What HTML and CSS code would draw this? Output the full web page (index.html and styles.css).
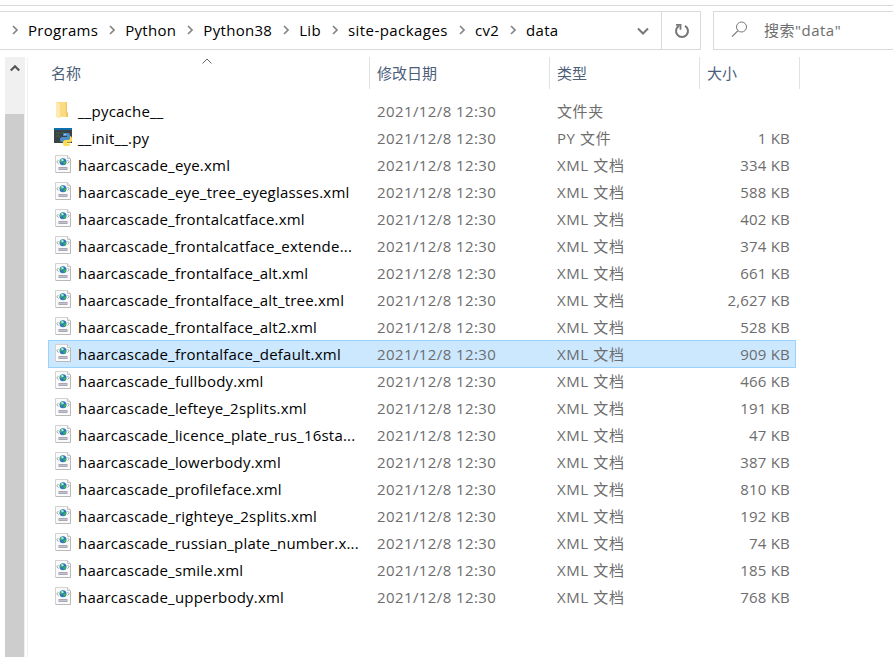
FILE: index.html
```
<!DOCTYPE html>
<html lang="zh">
<head>
  <meta charset="UTF-8">
  <title>data</title>
  <link rel="stylesheet" href="styles.css">
</head>
<body>
<svg class="symbols" width="0" height="0">
  <symbol id="arrow" viewBox="0 0 6 10">
    <path d="M1 1l4 4-4 4" fill="none" stroke="#858585" stroke-width="1.7"/>
  </symbol>
  <symbol id="folder" viewBox="0 0 18 20">
    <path d="M2 2h11v10l1 1v4H2z" fill="#fbdc84"/>
    <path d="M11.500 2.500h1.500v9.500l1 1v4h-2z" fill="#efc663"/>
    <path d="M2 2l4 2v14.800l-4-1.800z" fill="#ffebb0"/>
  </symbol>
  <symbol id="python" viewBox="0 0 18 20">
    <path d="M0 1h18v15H0z" fill="#3b4145"/>
    <path d="M0 1h18v2H0z" fill="#0f70b0"/>
    <path d="M2 6h4M7 6h3M2 9h4" stroke="#3f6a45"/>
    <path d="M10 6h4q2 0 2 2v3q0 2-2 2h-3q-2 0-2 2h-1q-2 0-2-2v-1q0-2 2-2h5V9H9V8q0-2 1-2z" fill="#4b8fca"/>
    <path d="M16 9q2 0 2 2.500v2q0 2-2 2h-3v1h3q0 2-1 2.500h-4q-2 0-2-2v-2q0-2 2-2h3q2 0 2-2z" fill="#ffdc55"/>
    <path d="M10.500 7h1v1h-1z" fill="#fff"/>
  </symbol>
  <symbol id="xml" viewBox="0 0 18 20">
    <path d="M1.500 1.500h12l3 3v14h-15z" fill="#fafafa" stroke="#d2d2d2"/>
    <path d="M16.500 5v13.500H2" fill="none" stroke="#b9b9b9"/>
    <path d="M13.500 1.500v3h3" fill="#eee" stroke="#c4c4c4"/>
    <path d="M4.500 6L2.800 7.800l1.700 1.800M13.500 6l1.700 1.800-1.700 1.800" fill="none" stroke="#a4a4ae"/>
    <circle cx="9" cy="7.800" r="3.500" fill="#2f74c0"/>
    <path d="M5.800 7.500q.7-3.200 4-3l-1 2.200-1.500 2zM9.200 7.500l3.200 0q-.2 2.600-2.700 3.600z" fill="#35b455"/>
    <path d="M7 5.500l2-.8.800 2-1.800.8z" fill="#a9e8f5"/>
    <path d="M4.500 14.500h9" stroke="#a8a7b5" stroke-width="3"/>
    <path d="M4.500 14.500h9" stroke="#c4c3cd"/>
  </symbol>
</svg>

<div class="toolbar">
  <div class="address">
    <ul class="path">
      <li><svg class="arrow"><use href="#arrow"/></svg><span>Programs</span></li>
      <li><svg class="arrow"><use href="#arrow"/></svg><span>Python</span></li>
      <li><svg class="arrow"><use href="#arrow"/></svg><span>Python38</span></li>
      <li><svg class="arrow"><use href="#arrow"/></svg><span>Lib</span></li>
      <li><svg class="arrow"><use href="#arrow"/></svg><span class="long">site-packages</span></li>
      <li><svg class="arrow"><use href="#arrow"/></svg><span>cv2</span></li>
      <li><svg class="arrow"><use href="#arrow"/></svg><span>data</span></li>
    </ul>
    <svg class="drop" width="12" height="8" viewBox="0 0 12 8"><path d="M1 1.500l5 5 5-5" fill="none" stroke="#777" stroke-width="2"/></svg>
    <div class="refresh">
      <svg width="16" height="16" viewBox="0 0 16 16"><path d="M11 2.800a6 6 0 1 1-6 0" fill="none" stroke="#777" stroke-width="2"/><path d="M2 1.800h4.500v5" fill="none" stroke="#777" stroke-width="1.800"/></svg>
    </div>
  </div>
  <div class="search">
    <svg width="17" height="17" viewBox="0 0 17 17"><circle cx="10.500" cy="6" r="5" fill="none" stroke="#777"/><path d="M7 9.600L1 15.600" stroke="#777" stroke-width="1.200"/></svg>
    <span>搜索"data"</span>
  </div>
</div>

<div class="main">
  <div class="scroll">
    <svg width="10" height="8" viewBox="0 0 10 8"><path d="M.8 6.500L5 2.200l4.200 4.300" fill="none" stroke="#555" stroke-width="2.200"/></svg>
    <div class="thumb"></div>
  </div>
  <div class="files">
    <div class="head">
      <div class="name">名称
        <svg class="sort" width="10" height="6" viewBox="0 0 10 6"><path d="M.5 5.500l4.500-4.500 4.500 4.500" fill="none" stroke="#666"/></svg>
      </div>
      <div class="date">修改日期</div>
      <div class="type">类型</div>
      <div class="size">大小</div>
    </div>
    <ul class="list">
      <li><svg class="icon"><use href="#folder"/></svg><span class="name">__pycache__</span><span class="date">2021/12/8 12:30</span><span class="type">文件夹</span><span class="size"></span></li>
      <li><svg class="icon"><use href="#python"/></svg><span class="name">__init__.py</span><span class="date">2021/12/8 12:30</span><span class="type">PY 文件</span><span class="size">1 KB</span></li>
      <li><svg class="icon"><use href="#xml"/></svg><span class="name">haarcascade_eye.xml</span><span class="date">2021/12/8 12:30</span><span class="type">XML 文档</span><span class="size">334 KB</span></li>
      <li><svg class="icon"><use href="#xml"/></svg><span class="name">haarcascade_eye_tree_eyeglasses.xml</span><span class="date">2021/12/8 12:30</span><span class="type">XML 文档</span><span class="size">588 KB</span></li>
      <li><svg class="icon"><use href="#xml"/></svg><span class="name">haarcascade_frontalcatface.xml</span><span class="date">2021/12/8 12:30</span><span class="type">XML 文档</span><span class="size">402 KB</span></li>
      <li><svg class="icon"><use href="#xml"/></svg><span class="name">haarcascade_frontalcatface_extende...</span><span class="date">2021/12/8 12:30</span><span class="type">XML 文档</span><span class="size">374 KB</span></li>
      <li><svg class="icon"><use href="#xml"/></svg><span class="name">haarcascade_frontalface_alt.xml</span><span class="date">2021/12/8 12:30</span><span class="type">XML 文档</span><span class="size">661 KB</span></li>
      <li><svg class="icon"><use href="#xml"/></svg><span class="name">haarcascade_frontalface_alt_tree.xml</span><span class="date">2021/12/8 12:30</span><span class="type">XML 文档</span><span class="size">2,627 KB</span></li>
      <li><svg class="icon"><use href="#xml"/></svg><span class="name">haarcascade_frontalface_alt2.xml</span><span class="date">2021/12/8 12:30</span><span class="type">XML 文档</span><span class="size">528 KB</span></li>
      <li class="current"><svg class="icon"><use href="#xml"/></svg><span class="name">haarcascade_frontalface_default.xml</span><span class="date">2021/12/8 12:30</span><span class="type">XML 文档</span><span class="size">909 KB</span></li>
      <li><svg class="icon"><use href="#xml"/></svg><span class="name">haarcascade_fullbody.xml</span><span class="date">2021/12/8 12:30</span><span class="type">XML 文档</span><span class="size">466 KB</span></li>
      <li><svg class="icon"><use href="#xml"/></svg><span class="name">haarcascade_lefteye_2splits.xml</span><span class="date">2021/12/8 12:30</span><span class="type">XML 文档</span><span class="size">191 KB</span></li>
      <li><svg class="icon"><use href="#xml"/></svg><span class="name">haarcascade_licence_plate_rus_16sta...</span><span class="date">2021/12/8 12:30</span><span class="type">XML 文档</span><span class="size">47 KB</span></li>
      <li><svg class="icon"><use href="#xml"/></svg><span class="name">haarcascade_lowerbody.xml</span><span class="date">2021/12/8 12:30</span><span class="type">XML 文档</span><span class="size">387 KB</span></li>
      <li><svg class="icon"><use href="#xml"/></svg><span class="name">haarcascade_profileface.xml</span><span class="date">2021/12/8 12:30</span><span class="type">XML 文档</span><span class="size">810 KB</span></li>
      <li><svg class="icon"><use href="#xml"/></svg><span class="name">haarcascade_righteye_2splits.xml</span><span class="date">2021/12/8 12:30</span><span class="type">XML 文档</span><span class="size">192 KB</span></li>
      <li><svg class="icon"><use href="#xml"/></svg><span class="name">haarcascade_russian_plate_number.x...</span><span class="date">2021/12/8 12:30</span><span class="type">XML 文档</span><span class="size">74 KB</span></li>
      <li><svg class="icon"><use href="#xml"/></svg><span class="name">haarcascade_smile.xml</span><span class="date">2021/12/8 12:30</span><span class="type">XML 文档</span><span class="size">185 KB</span></li>
      <li><svg class="icon"><use href="#xml"/></svg><span class="name">haarcascade_upperbody.xml</span><span class="date">2021/12/8 12:30</span><span class="type">XML 文档</span><span class="size">768 KB</span></li>
    </ul>
  </div>
</div>
</body>
</html>
```
FILE: styles.css
```
* {
  box-sizing: border-box;
}

body, div, ul, li {
  margin: 0;
  padding: 0;
}

ul {
  list-style-type: none;
}

body {
  height: 657px;
  padding-top: 5px;
  overflow: hidden;
  background: #fff;
  color: #000;
  font: 15px/20px "Open Sans", "Noto Sans CJK SC", sans-serif;
}

.symbols {
  position: absolute;
}

.toolbar {
  display: flex;
  height: 52px;
  padding-top: 5px;
  border-top: 1px solid #d9d9d9;
}

.address {
  display: flex;
  align-items: center;
  width: 701px;
  height: 39px;
  border: 1px solid #d9d9d9;
  border-left: 0;
}

.path {
  display: flex;
  flex: 1;
  gap: 11px;
  padding: 0 0 2px 12px;
  letter-spacing: 0.3px;
}

.path li {
  display: flex;
  align-items: center;
  gap: 10px;
}

.path .long {
  letter-spacing: 0.45px;
}

.arrow {
  width: 6px;
  height: 10px;
}

.drop {
  margin-right: 12px;
}

.refresh {
  display: flex;
  align-items: center;
  justify-content: center;
  width: 39px;
  height: 37px;
  padding-left: 2px;
  border-left: 1px solid #d9d9d9;
}

.search {
  display: flex;
  flex: 1;
  align-items: center;
  gap: 16px;
  height: 39px;
  margin-left: 12px;
  padding: 0 0 2px 17px;
  border: 1px solid #d9d9d9;
  border-right: 0;
  color: #6d6d6d;
  letter-spacing: 0.5px;
}

.main {
  display: flex;
  height: 600px;
  padding-left: 5px;
}

.scroll {
  display: flex;
  flex-direction: column;
  width: 20px;
  background: #f0f0f0;
}

.scroll svg {
  margin: 7px 0 0 5px;
}

.thumb {
  flex: 1;
  width: 19px;
  margin-top: 42px;
  background: #cdcdcd;
}

.files {
  flex: 1;
  margin-left: 2px;
  border-left: 1px solid #f3f3f3;
}

.head {
  display: flex;
  height: 32px;
  padding-left: 20px;
  color: #4c607a;
  line-height: 32px;
}

.head div {
  padding-left: 7px;
  border-right: 1px solid #e2e2e2;
}

.head .name {
  position: relative;
  width: 322px;
  padding-left: 3px;
}

.head .date {
  width: 180px;
}

.head .type {
  width: 150px;
}

.head .size {
  width: 100px;
}

.sort {
  position: absolute;
  top: 1px;
  left: 154px;
}

.list {
  width: 748px;
  margin: 8px 0 0 20px;
}

.list li {
  display: flex;
  align-items: center;
  height: 28px;
  margin: 0 0 -1px;
  padding: 0 5px;
  border: 1px solid transparent;
  color: #6d6d6d;
  white-space: nowrap;
}

.list li.current {
  background: #cce8ff;
  border-color: #99d1ff;
}

.icon {
  width: 18px;
  height: 20px;
  margin-top: -3px;
}

.list .name {
  width: 305px;
  padding-left: 6px;
  color: #000;
  letter-spacing: 0.21px;
}

.list .date {
  width: 180px;
  letter-spacing: 0.4px;
}

.list .type {
  width: 130px;
  letter-spacing: 0.6px;
}

.list .size {
  flex: 1;
  letter-spacing: 0.2px;
  text-align: right;
}
```
